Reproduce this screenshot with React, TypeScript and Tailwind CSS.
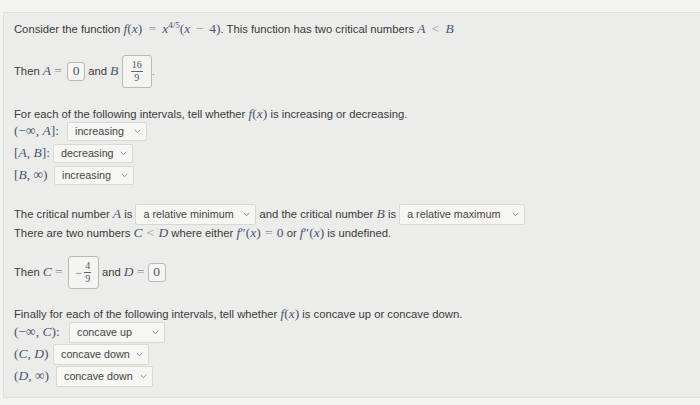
import React from "react";

const sans = { fontFamily: '"Liberation Sans", Arial, sans-serif' };

function M({ children }: { children: React.ReactNode }) {
  return (
    <span className="text-[13.5px] text-[#4b5672]" style={{ fontFamily: '"Liberation Serif", "DejaVu Serif", serif' }}>
      {children}
    </span>
  );
}
function V({ children }: { children: React.ReactNode }) {
  return <i>{children}</i>;
}
function Op({ children, w = 16 }: { children: React.ReactNode; w?: number }) {
  return (
    <span className="inline-block text-center text-[#8a90a0]" style={{ width: w }}>
      {children}
    </span>
  );
}

function Chevron() {
  return (
    <svg width="7" height="5" viewBox="0 0 7 5" className="shrink-0">
      <polyline points="0.8,0.8 3.5,3.8 6.2,0.8" fill="none" stroke="#8a93a8" strokeWidth="1" />
    </svg>
  );
}

function Select({ text, w, h = 19 }: { text: string; w: number; h?: number }) {
  return (
    <span
      className="inline-flex items-center justify-between border border-[#d8d8d4] bg-[#f6f6f3] rounded-[2px] pl-[7px] pr-[5px] text-[10.75px] text-[#444]"
      style={{ width: w, height: h }}
    >
      <span>{text}</span>
      <Chevron />
    </span>
  );
}

function Box({ children, w, h }: { children: React.ReactNode; w: number; h: number }) {
  return (
    <span
      className="inline-flex items-center justify-center border border-[#b9b9b5] bg-[#f4f4f1] rounded-[3px]"
      style={{ width: w, height: h }}
    >
      {children}
    </span>
  );
}

function Frac({ n, d, neg }: { n: string; d: string; neg?: boolean }) {
  return (
    <span className="inline-flex items-center text-[#4b5672]" style={{ fontFamily: '"Liberation Serif", serif' }}>
      {neg && <span className="text-[12px] mr-[2px] text-[#6a7085]">−</span>}
      <span className="inline-flex flex-col items-center leading-[10px] text-[10px]">
        <span className="px-[1px]">{n}</span>
        <span className="w-full h-px bg-[#5a637a] my-[1px]" />
        <span className="px-[1px]">{d}</span>
      </span>
    </span>
  );
}

export default function App() {
  return (
    <div className="w-[700px] h-[405px] bg-[#f3f3f0] pt-[12px] pl-[3px] overflow-hidden" style={sans}>
      <div className="w-[720px] h-[386px] border border-[#dededa] bg-[#ececea] pl-[10px] text-[11.25px] text-[#3a3a3a] flex flex-col">
        <div className="mt-[7px] h-[18px] flex items-center whitespace-nowrap">
          <span>Consider the function&nbsp;</span>
          <M>
            <V>f</V>(<V>x</V>)<Op w={20}>=</Op><V>x</V>
            <sup className="text-[9px]">4/5</sup>(<V>x</V><Op w={19}>−</Op>4)
          </M>
          <span>. This function has two critical numbers&nbsp;</span>
          <M>
            <V>A</V>
            <Op w={20}>&lt;</Op>
            <V>B</V>
          </M>
        </div>

        <div className="mt-[16px] h-[34px] flex items-center whitespace-nowrap">
          <span>Then&nbsp;</span>
          <M>
            <V>A</V>
            <Op w={14}>=</Op>
          </M>
          <span className="w-[2px]" />
          <Box w={18} h={19}>
            <M>0</M>
          </Box>
          <span>&nbsp;and&nbsp;</span>
          <M>
            <V>B</V>&nbsp;
          </M>
          <Box w={30} h={33}>
            <Frac n="16" d="9" />
          </Box>
          <span className="text-[#888]">.</span>
        </div>

        <div className="mt-[18px] h-[16px] flex items-center whitespace-nowrap">
          <span>For each of the following intervals, tell whether&nbsp;</span>
          <M>
            <V>f</V>(<V>x</V>)
          </M>
          <span>&nbsp;is increasing or decreasing.</span>
        </div>

        <div className="h-[19px] flex items-center whitespace-nowrap">
          <span className="w-[53px]">
            <M>
              (−∞, <V>A</V>]:
            </M>
          </span>
          <Select text="increasing" w={80} />
        </div>
        <div className="mt-[3px] h-[19px] flex items-center whitespace-nowrap">
          <span className="w-[39px]">
            <M>
              [<V>A</V>, <V>B</V>]:
            </M>
          </span>
          <Select text="decreasing" w={80} />
        </div>
        <div className="mt-[3px] h-[19px] flex items-center whitespace-nowrap">
          <span className="w-[40px]">
            <M>
              [<V>B</V>, ∞)
            </M>
          </span>
          <Select text="increasing" w={80} />
        </div>

        <div className="mt-[19px] h-[21px] flex items-center whitespace-nowrap">
          <span>The critical number&nbsp;</span>
          <M>
            <V>A</V>
          </M>
          <span>&nbsp;is&nbsp;</span>
          <Select text="a relative minimum" w={121} h={21} />
          <span>&nbsp;and the critical number&nbsp;</span>
          <M>
            <V>B</V>
          </M>
          <span>&nbsp;is&nbsp;</span>
          <Select text="a relative maximum" w={126} h={21} />
        </div>
        <div className="h-[16px] flex items-center whitespace-nowrap">
          <span>There are two numbers&nbsp;</span>
          <M>
            <V>C</V>
            <Op>&lt;</Op>
            <V>D</V>
          </M>
          <span>&nbsp;where either&nbsp;</span>
          <M>
            <V>f</V>″(<V>x</V>)<Op>=</Op>0
          </M>
          <span>&nbsp;or&nbsp;</span>
          <M>
            <V>f</V>″(<V>x</V>)
          </M>
          <span>&nbsp;is undefined.</span>
        </div>

        <div className="mt-[15px] h-[33px] flex items-center whitespace-nowrap">
          <span>Then&nbsp;</span>
          <M>
            <V>C</V>
            <Op w={14}>=</Op>
          </M>
          <span className="w-[2px]" />
          <Box w={31} h={33}>
            <Frac n="4" d="9" neg />
          </Box>
          <span>&nbsp;and&nbsp;</span>
          <M>
            <V>D</V>
            <Op w={14}>=</Op>
          </M>
          <Box w={18} h={19}>
            <M>0</M>
          </Box>
        </div>

        <div className="mt-[18px] h-[15px] flex items-center whitespace-nowrap">
          <span>Finally for each of the following intervals, tell whether&nbsp;</span>
          <M>
            <V>f</V>(<V>x</V>)
          </M>
          <span>&nbsp;is concave up or concave down.</span>
        </div>
        <div className="h-[21px] flex items-center whitespace-nowrap">
          <span className="w-[55px]">
            <M>
              (−∞, <V>C</V>):
            </M>
          </span>
          <Select text="concave up" w={96} h={21} />
        </div>
        <div className="mt-[1px] h-[21px] flex items-center whitespace-nowrap">
          <span className="w-[39px]">
            <M>
              (<V>C</V>, <V>D</V>)
            </M>
          </span>
          <Select text="concave down" w={96} h={21} />
        </div>
        <div className="mt-[1px] h-[21px] flex items-center whitespace-nowrap">
          <span className="w-[42px]">
            <M>
              (<V>D</V>, ∞)
            </M>
          </span>
          <Select text="concave down" w={97} h={21} />
        </div>
      </div>
    </div>
  );
}
